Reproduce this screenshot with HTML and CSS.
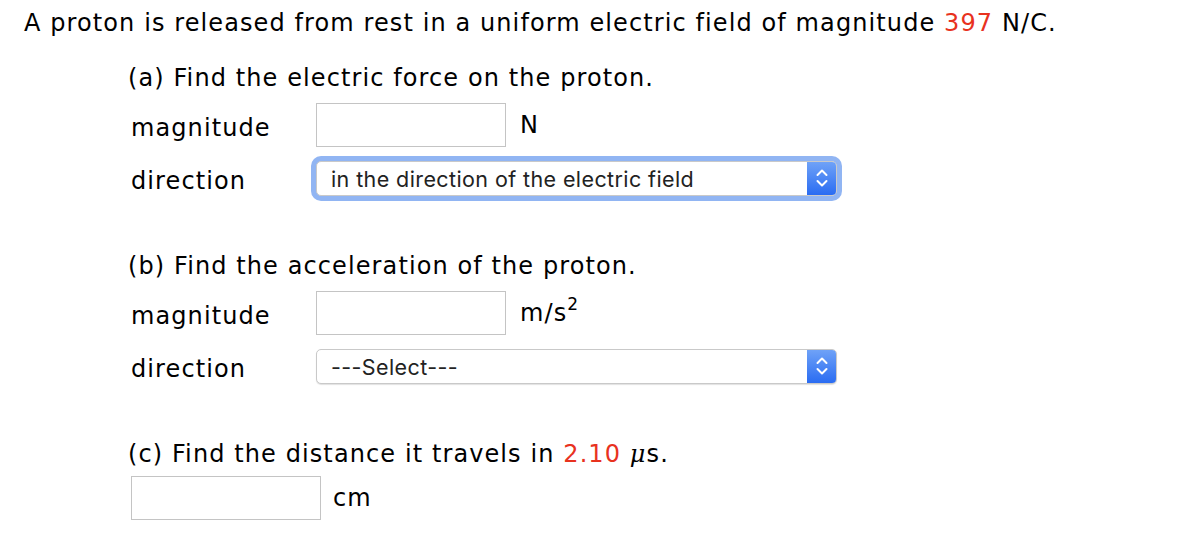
FILE: index.html
```html
<!DOCTYPE html>
<html>
<head>
<meta charset="utf-8">
<link rel="stylesheet" href="styles.css">
</head>
<body>
<div class="stem">A proton is released from rest in a uniform electric field of magnitude <span class="red">397</span> N/C.</div>

<div class="part part-a">
  <div class="q">(a) Find the electric force on the proton.</div>
  <div class="row row-mag">
    <span class="label">magnitude</span>
    <span class="input"></span>
    <span class="unit">N</span>
  </div>
  <div class="row row-dir">
    <span class="label">direction</span>
    <span class="select focused"><span class="sel-text">in the direction of the electric field</span><span class="arrow"><svg width="14" height="22" viewBox="0 0 14 22"><path d="M2.5 8 L7 3.5 L11.5 8 M2.5 14 L7 18.5 L11.5 14" fill="none" stroke="#fff" stroke-width="2" stroke-linecap="round" stroke-linejoin="round"/></svg></span></span>
  </div>
</div>

<div class="part part-b">
  <div class="q">(b) Find the acceleration of the proton.</div>
  <div class="row row-mag">
    <span class="label">magnitude</span>
    <span class="input"></span>
    <span class="unit">m/s<sup>2</sup></span>
  </div>
  <div class="row row-dir">
    <span class="label">direction</span>
    <span class="select"><span class="sel-text">---Select---</span><span class="arrow"><svg width="14" height="22" viewBox="0 0 14 22"><path d="M2.5 8 L7 3.5 L11.5 8 M2.5 14 L7 18.5 L11.5 14" fill="none" stroke="#fff" stroke-width="2" stroke-linecap="round" stroke-linejoin="round"/></svg></span></span>
  </div>
</div>

<div class="part part-c">
  <div class="q">(c) Find the distance it travels in <span class="red">2.10</span> <i class="mu">μ</i>s.</div>
  <div class="row row-c">
    <span class="input"></span>
    <span class="unit cm">cm</span>
  </div>
</div>
</body>
</html>
```

FILE: styles.css
```css
html, body {
  margin: 0;
  padding: 0;
  background: #fff;
}
body {
  font-family: "DejaVu Sans", Verdana, sans-serif;
  font-size: 24px;
  letter-spacing: 1.1px;
  color: #000;
}
.red { color: #e8321e; }
.mu { font-family: "DejaVu Serif", serif; font-style: italic; }
.stem {
  padding-left: 24px;
  height: 44px;
  line-height: 46px;
}
.part {
  margin-left: 128px;
}
.q {
  height: 44px;
  line-height: 44px;
}
.part-a { margin-top: 12px; }
.part-b { margin-top: 44px; }
.part-c { margin-top: 44px; }
.row {
  display: flex;
  align-items: center;
  padding-left: 3px;
}
.row-mag { height: 46px; margin-top: 2px; }
.row-dir { height: 44px; margin-top: 8px; }
.label {
  width: 185px;
  flex: none;
  padding-top: 5px;
}
.input {
  width: 188px;
  height: 42px;
  border: 1px solid #c4c4c4;
  background: #fff;
  flex: none;
}
.unit {
  margin-left: 14px;
}
.unit sup {
  font-size: 17px;
  vertical-align: 11px;
  line-height: 0;
}
.select {
  position: relative;
  display: flex;
  align-items: center;
  width: 519px;
  height: 33px;
  border: 1px solid #c9c9c9;
  border-radius: 5px;
  background: #fff;
  box-shadow: 0 1px 1px rgba(0,0,0,0.12);
  font-family: Inter, "Liberation Sans", Arial, sans-serif;
  font-size: 21.5px;
  letter-spacing: 0.4px;
  color: #222;
}
.select.focused {
  box-shadow: 0 0 0 5px #91b5f3;
}
.sel-text {
  flex: 1;
  padding-left: 14px;
  padding-top: 2px;
}
.arrow {
  width: 29px;
  align-self: stretch;
  background: linear-gradient(#6fa2f7, #2a6cf2);
  border-radius: 0 4px 4px 0;
  display: flex;
  align-items: center;
  justify-content: center;
}
.row-c {
  padding-left: 3px;
  height: 44px;
  margin-top: 0;
}
.unit.cm {
  margin-left: 12px;
}
```
